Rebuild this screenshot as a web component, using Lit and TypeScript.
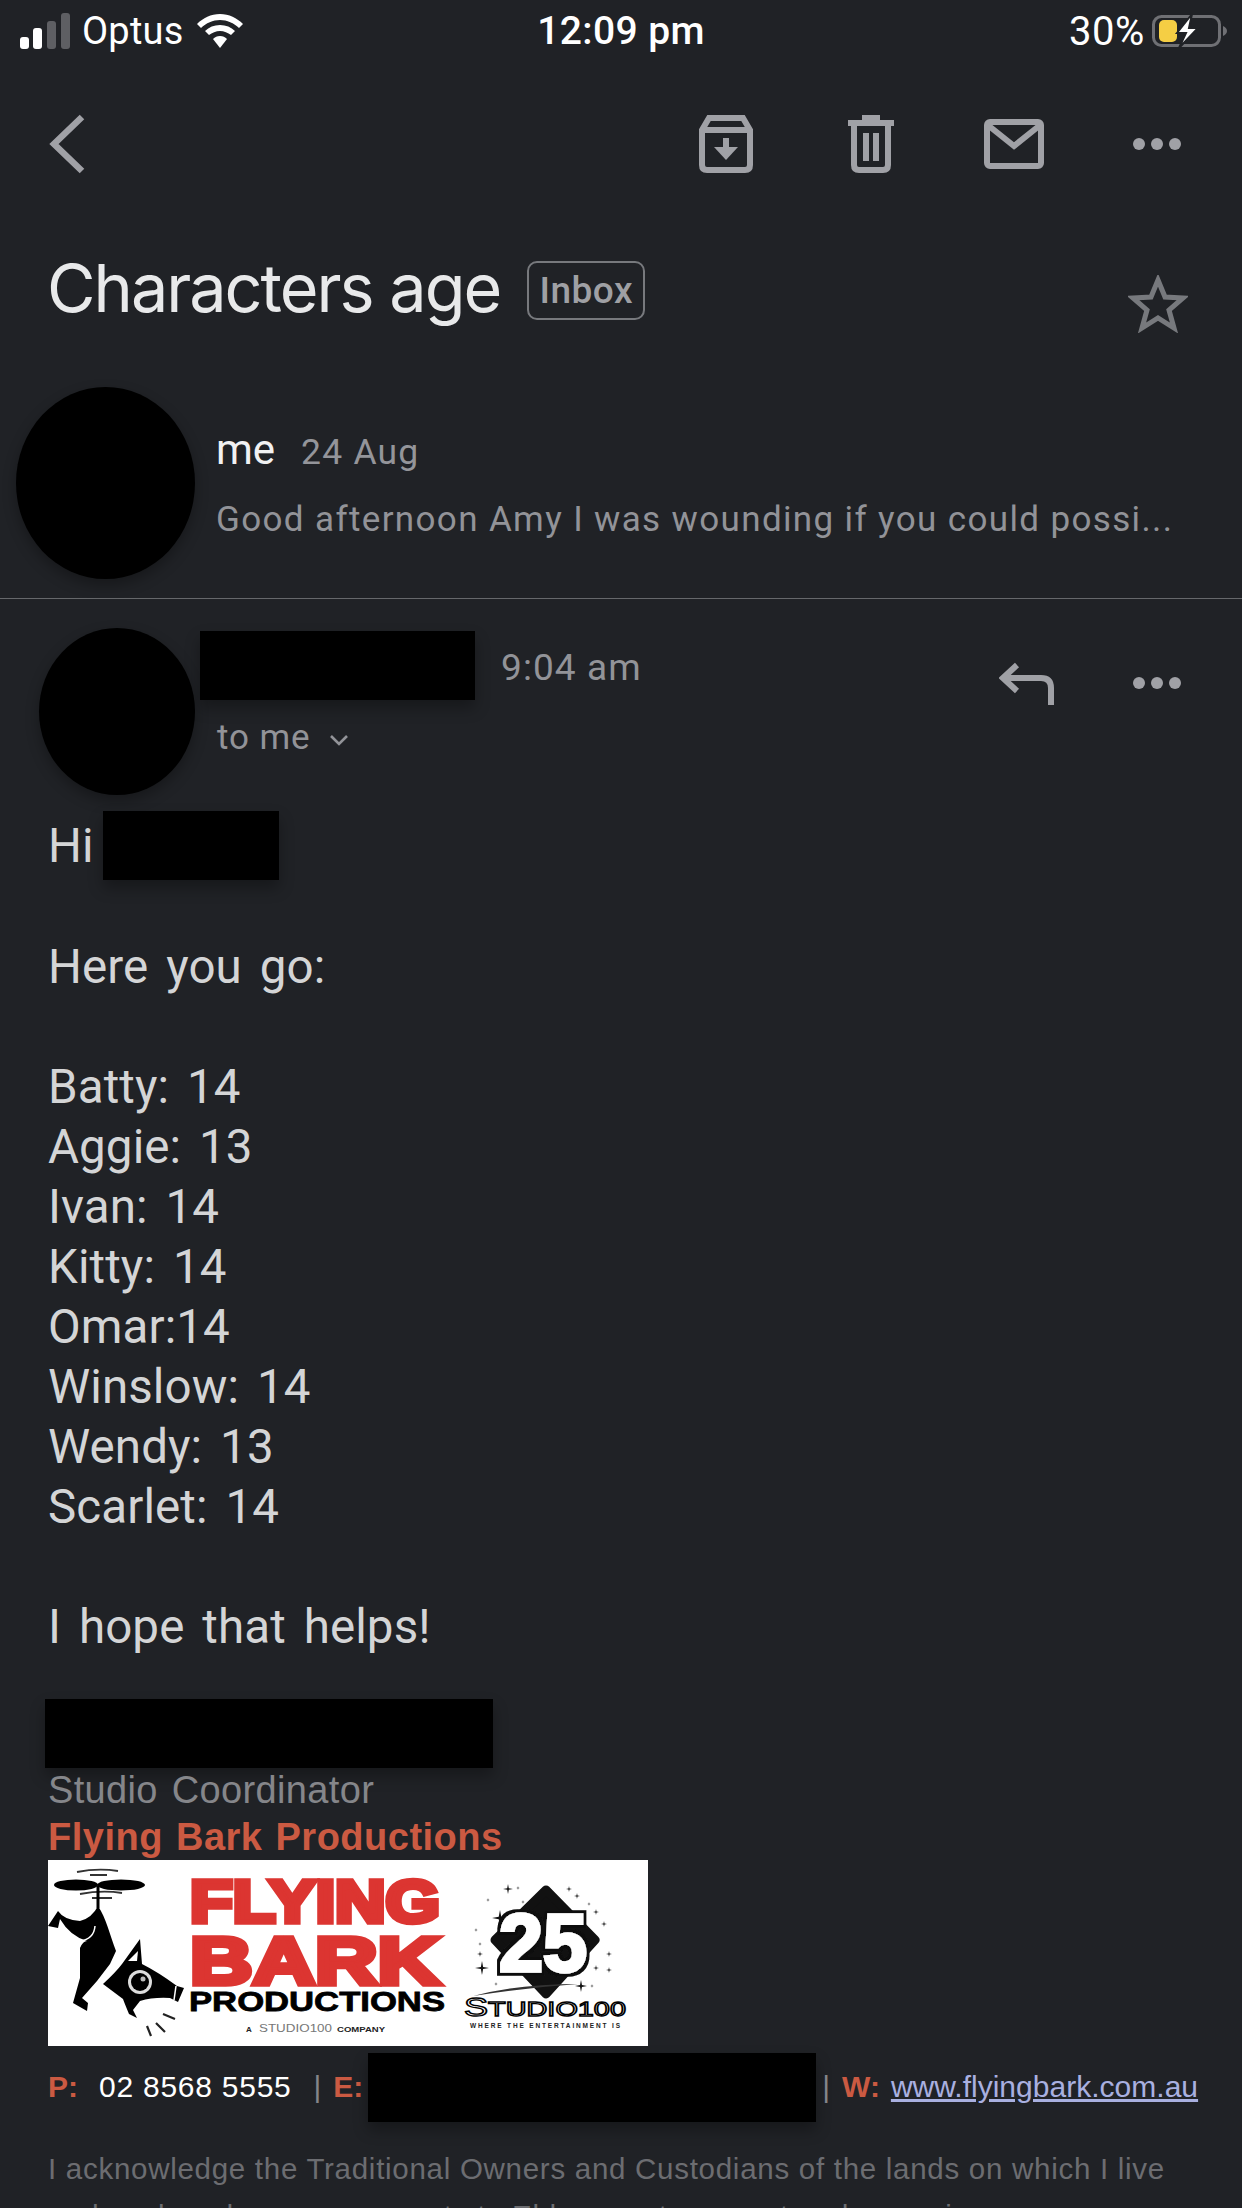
import { LitElement, html, css, svg } from "lit";
import { customElement } from "lit/decorators.js";

const ICON = "#a0a1a6";

function star(x: number, y: number, r: number) {
  const k = r * 0.16;
  return svg`<path d="M${x} ${y - r} L${x + k} ${y - k} L${x + r} ${y} L${x + k} ${y + k} L${x} ${y + r} L${x - k} ${y + k} L${x - r} ${y} L${x - k} ${y - k} Z" fill="#111"/>`;
}

const STARS: [number, number, number][] = [
  [452, 58, 8], [537, 84, 8], [434, 108, 7], [460, 29, 5], [521, 29, 3], [529, 36, 3], [556, 64, 3],
  [561, 94, 3], [561, 110, 3], [428, 70, 2], [432, 94, 3], [432, 84, 2], [440, 40, 2], [548, 52, 3], [548, 108, 3],
  [470, 28, 2], [448, 124, 2], [544, 126, 2], [533, 126, 6], [475, 42, 2], [541, 44, 2],
];

@customElement("app-root")
export class AppRoot extends LitElement {
  static styles = css`
    :host { display: block; width: 1242px; height: 2208px; overflow: hidden; background: #202226; font-family: "Roboto", "Liberation Sans", sans-serif; }
    svg { display: block; flex: none; }
    .status { height: 62px; display: flex; align-items: center; position: relative; color: #fff; font-size: 38px; padding: 0 14px 0 20px; }
    .status .carrier { margin-left: 12px; margin-right: 14px; letter-spacing: .2px; }
    .status .time { position: absolute; left: 0; right: 0; top: 10px; line-height: 42px; text-align: center; font-weight: 500; font-size: 39px; letter-spacing: .4px; }
    .status .pct { margin-left: auto; margin-right: 7px; letter-spacing: .6px; font-size: 40px; }
    .toolbar { height: 118px; display: flex; align-items: center; padding: 0 0 0 48px; margin-top: 23px; }
    .tools { margin-left: auto; display: flex; align-items: center; }
    .t-archive { margin-right: 95px; }
    .t-trash { margin-right: 90px; }
    .t-mail { margin-right: 89px; }
    .t-dots { margin-right: 61px; }
    .titlebar { display: flex; align-items: center; height: 124px; padding: 0 0 0 47px; margin-top: 23px; }
    h1 { margin: 0; font: 400 66.5px/80px "Inter", "Roboto", sans-serif; letter-spacing: -2px; color: #e8e9ea; }
    .badge { margin-left: 27px; width: 118px; height: 59px; box-sizing: border-box; border: 2px solid #77797d; border-radius: 10px; color: #9fa0a4; font: 500 37px/56px "Roboto", sans-serif; text-align: center; margin-top: 4px; letter-spacing: .5px; }
    .star { margin-left: auto; margin-right: 54px; margin-top: 32px; }
    .thread1 { display: flex; padding: 0 0 0 16px; margin-top: 37px; height: 212px; box-sizing: border-box; border-bottom: 1px solid #66686b; }
    .av1 { width: 179px; height: 192px; border-radius: 50%; background: #000; box-shadow: 0 6px 14px rgba(0,0,0,.3); flex: none; }
    .meta { margin-left: 21px; padding-top: 41px; min-width: 0; }
    .line1 { display: flex; align-items: baseline; height: 44px; }
    .me { color: #f1f1f2; font-size: 42px; line-height: 44px; }
    .date { color: #94959a; font-size: 35.5px; line-height: 44px; margin-left: 26px; letter-spacing: 1.2px; }
    .snippet { color: #929398; font-size: 35px; line-height: 44px; margin-top: 26px; letter-spacing: 1.36px; white-space: nowrap; }
    .thread2 { display: flex; padding: 29px 0 0 39px; height: 240px; box-sizing: border-box; }
    .av2 { width: 156px; height: 167px; border-radius: 50%; background: #000; box-shadow: 0 6px 14px rgba(0,0,0,.3); flex: none; }
    .sender { margin-left: 5px; padding-top: 3px; flex: 1; }
    .sline { display: flex; }
    .redact { background: #000; box-shadow: 0 8px 14px rgba(0,0,0,.3); flex: none; }
    .r-name { width: 275px; height: 69px; }
    .time2 { margin-left: 26px; margin-top: 15px; color: #929398; font-size: 37px; line-height: 44px; letter-spacing: 1.1px; }
    .acts { margin-left: auto; display: flex; align-items: center; margin-top: 30px; align-self: flex-start; }
    .t-reply { margin-right: 78px; }
    .tome { display: flex; align-items: center; color: #929398; font-size: 35px; line-height: 44px; margin: 11px 0 0 17px; letter-spacing: .9px; }
    .chev { margin-left: 18px; margin-top: 4px; }
    .body { padding: 0 0 0 48px; margin-top: -28px; color: #d4d5d6; font-size: 47.5px; font-weight: 400; line-height: 60px; letter-spacing: .1px; word-spacing: 6px; }
    .body p { margin: 0 0 60px; }
    .body p.last { margin: 0; }
    .hi { display: flex; align-items: center; height: 69px; margin-bottom: 57px; }
    .r-hi { width: 176px; height: 69px; margin-left: 9px; }
    .sig { margin: 42px 0 0 45px; font-family: "Liberation Sans", Arial, sans-serif; }
    .r-sig { width: 448px; height: 69px; }
    .role { color: #85868a; font-size: 38px; line-height: 46px; margin: -1px 0 0 3px; letter-spacing: .35px; word-spacing: 3px; }
    .co { color: #cb5a42; font-size: 38px; line-height: 46px; font-weight: 700; margin: 1px 0 0 3px; letter-spacing: .5px; word-spacing: 2px; }
    .logo { margin: 0 0 0 3px; }
    .logo svg { background: #fff; }
    .contact { display: flex; align-items: center; height: 70px; margin-top: 6px; margin-left: 3px; font-size: 30px; white-space: nowrap; color: #fff; }
    .contact b { color: #cb5a42; }
    .phone { margin-left: 21px; letter-spacing: .75px; }
    .sep { color: #85868a; margin-left: 22px; }
    .contact b.e { margin-left: 12px; }
    .r-mail { width: 448px; height: 69px; margin: 0 6px 0 5px; }
    .sep2 { color: #85868a; }
    .contact b.w { margin-left: 12px; }
    .contact a { color: #a9b0e0; text-decoration: underline; margin-left: 11px; letter-spacing: .02px; }
    .ack { color: #6c6d71; font-size: 29.5px; line-height: 47px; margin: 23px 0 0 3px; white-space: nowrap; letter-spacing: .72px; }
  `;

  private dots() {
    return html`<svg width="48" height="16" viewBox="0 0 48 16" fill="${ICON}"><circle cx="6" cy="8" r="6"/><circle cx="24" cy="8" r="6"/><circle cx="42" cy="8" r="6"/></svg>`;
  }

  private logo() {
    return html`<svg width="600" height="186" viewBox="0 0 600 186">
      <defs>
        <filter id="outline" x="-10%" y="-10%" width="120%" height="120%">
          <feMorphology in="SourceAlpha" operator="dilate" radius="2.500" result="d"/>
          <feFlood flood-color="#111"/>
          <feComposite in2="d" operator="in" result="o"/>
          <feMerge><feMergeNode in="o"/><feMergeNode in="SourceGraphic"/></feMerge>
        </filter>
      </defs>
      <!-- rotor -->
      <ellipse cx="28" cy="25" rx="22" ry="5.500" fill="#000"/><ellipse cx="73" cy="25" rx="24" ry="5.500" fill="#000"/>
      <path d="M29 12 Q50 8 70 11 M42 15 h17 M32 34 Q54 30 74 33 M44 38 h20" stroke="#333" stroke-width="1.800" fill="none"/>
      <path d="M48.500 26 h3 v22 h-3 z" fill="#000"/>
      <!-- hanging body -->
      <path fill="#000" d="M50 46 C58 58 62 75 68 91 L62 104 L49 121 L34 138 L40 143 L39 151 L25 143 L32 118 L32 88 Q35 81 39 81 Q22 76 12 59 L10 68 L0 66 L10 51 Q16 60 32 61 Q44 58 50 46 Z"/>
      <path d="M47 66 Q46 79 32 81" stroke="#fff" stroke-width="1.500" fill="none"/>
      <!-- head -->
      <path fill="#000" d="M55 124 Q68 112 74 104 L92 79 L94 104 Q110 112 129 126 L136 128 L130 142 L122 138 Q105 137 92 141 L85 150 L89 158 L81 154 Q76 142 75 139 Z"/>
      <path d="M80 101 L90 91 L89 101 Z" fill="#fff"/>
      <path d="M128 126 L126 140" stroke="#fff" stroke-width="1.500"/>
      <circle cx="92" cy="122" r="12" fill="#ddd"/><circle cx="92" cy="122" r="9" fill="#000"/><circle cx="95" cy="119" r="2.500" fill="#bbb"/>
      <path d="M115 154 L127 159 M108 163 L117 172 M99 166 L103 176" stroke="#222" stroke-width="2.200" fill="none"/>

      <g font-family="Liberation Sans, sans-serif" font-weight="700">
        <text x="142" y="62" font-size="60" fill="#dc3531" stroke="#dc3531" stroke-width="5.500" textLength="250" lengthAdjust="spacingAndGlyphs">FLYING</text>
        <text x="142" y="124" font-size="66" fill="#dc3531" stroke="#dc3531" stroke-width="5.500" textLength="250" lengthAdjust="spacingAndGlyphs">BARK</text>
        <text x="141" y="151" font-size="28" fill="#000" stroke="#000" stroke-width=".8" textLength="256" lengthAdjust="spacingAndGlyphs">PRODUCTIONS</text>
        <text x="198" y="172" font-size="8" fill="#222">A</text>
        <text x="211" y="172" font-size="11" fill="#777" font-weight="400" textLength="73" lengthAdjust="spacingAndGlyphs">STUDIO100</text>
        <text x="289" y="172" font-size="8" fill="#222" textLength="48" lengthAdjust="spacingAndGlyphs">COMPANY</text>
      </g>

      <!-- 25 badge -->
      <path d="M498 30 L547 80 L498 134 L447 80 Z" fill="#111" stroke="#111" stroke-width="9" stroke-linejoin="round"/>
      ${STARS.map(([x, y, r]) => star(x, y, r))}
      <text x="451" y="111" font-family="Liberation Sans, sans-serif" font-weight="700" font-size="82" fill="#fff" stroke="#fff" stroke-width="3.500" filter="url(#outline)" textLength="88" lengthAdjust="spacingAndGlyphs">25</text>
      <path d="M425 136 Q470 124 530 124 Q475 128 425 136 Z" fill="#333"/>
      <text x="416" y="156" font-family="Liberation Sans, sans-serif" fill="#fff" stroke="#000" stroke-width="1.300" textLength="162" lengthAdjust="spacingAndGlyphs"><tspan font-size="25">S</tspan><tspan font-size="20">TUDIO100</tspan></text>
      <text x="422" y="168" font-family="Liberation Sans, sans-serif" font-weight="700" font-size="6.500" fill="#222" textLength="150" lengthAdjust="spacing">WHERE THE ENTERTAINMENT IS</text>
    </svg>`;
  }

  render() {
    return html`
      <div class="status">
        <svg width="50" height="36" viewBox="0 0 50 36"><rect x="0" y="24" width="9" height="12" rx="3" fill="#fff"/><rect x="13" y="15" width="9" height="21" rx="3" fill="#fff"/><rect x="27" y="8" width="9" height="28" rx="3" fill="#5e5f63"/><rect x="41" y="0" width="9" height="36" rx="3" fill="#5e5f63"/></svg>
        <span class="carrier">Optus</span>
        <svg width="46" height="34" viewBox="0 0 46 34" fill="#fff"><path d="M23 0 C32 0 40 4 46 10 L42 14 C37 9 30 6 23 6 C16 6 9 9 4 14 L0 10 C6 4 14 0 23 0 Z"/><path d="M23 11 C29 11 34 13 38 17 L34 21 C31 19 27 17 23 17 C19 17 15 19 12 21 L8 17 C12 13 17 11 23 11 Z"/><path d="M23 22 C26 22 28 23 30 25 L23 34 L16 25 C18 23 20 22 23 22 Z"/></svg>
        <span class="time">12:09 pm</span>
        <span class="pct">30%</span>
        <svg width="76" height="36" viewBox="0 0 76 36"><rect x="1.500" y="3.500" width="66" height="29" rx="8" fill="none" stroke="#6f7074" stroke-width="3"/><rect x="7" y="7" width="18" height="22" rx="5" fill="#f5ce44"/><path d="M71 13 q4 2 4 5 q0 3 -4 5 z" fill="#6f7074"/><path d="M40 1 L25 20 H34 L27 35 L46 15 H37 Z" fill="#fff" stroke="#202226" stroke-width="2"/></svg>
      </div>

      <div class="toolbar">
        <svg width="38" height="60" viewBox="0 0 38 60"><path d="M34 3 L6 30 L34 57" fill="none" stroke="${ICON}" stroke-width="6.500"/></svg>
        <div class="tools">
          <svg class="t-archive" width="54" height="58" viewBox="0 0 54 58" fill="none" stroke="${ICON}" stroke-width="6"><path d="M3 15 L10 3 H44 L51 15 V50 Q51 55 46 55 H8 Q3 55 3 50 Z"/><path d="M3 15 H51"/><path d="M27 23 V36"/><path d="M15 32 H39 L27 45 Z" fill="${ICON}" stroke="none"/></svg>
          <svg class="t-trash" width="46" height="58" viewBox="0 0 46 58" fill="none" stroke="${ICON}" stroke-width="6"><path d="M0 8 H46 M14 3 H32"/><path d="M6 10 V50 Q6 55 11 55 H35 Q40 55 40 50 V10"/><path d="M18 18 V46 M28 18 V46"/></svg>
          <svg class="t-mail" width="60" height="50" viewBox="0 0 60 50" fill="none" stroke="${ICON}" stroke-width="6"><rect x="3" y="3" width="54" height="44" rx="3"/><path d="M5 7 L30 27 L55 7"/></svg>
          <span class="t-dots">${this.dots()}</span>
        </div>
      </div>

      <div class="titlebar">
        <h1>Characters age</h1>
        <span class="badge">Inbox</span>
        <svg class="star" width="60" height="58" viewBox="0 0 60 58"><path d="M30 5 L37 22 L55 23 L41 35 L46 53 L30 43 L14 53 L19 35 L5 23 L23 22 Z" fill="none" stroke="#77797d" stroke-width="5"/></svg>
      </div>

      <div class="thread1">
        <div class="av1"></div>
        <div class="meta">
          <div class="line1"><span class="me">me</span><span class="date">24 Aug</span></div>
          <div class="snippet">Good afternoon Amy I was wounding if you could possi...</div>
        </div>
      </div>

      <div class="thread2">
        <div class="av2"></div>
        <div class="sender">
          <div class="sline">
            <div class="redact r-name"></div>
            <span class="time2">9:04 am</span>
            <div class="acts">
              <svg class="t-reply" width="56" height="44" viewBox="0 0 56 44" fill="none" stroke="${ICON}" stroke-width="6"><path d="M18 4 L4 17 L18 30"/><path d="M5 17 H42 Q52 17 52 27 V44"/></svg>
              <span class="t-dots">${this.dots()}</span>
            </div>
          </div>
          <div class="tome">to me
            <svg class="chev" width="20" height="12" viewBox="0 0 20 12"><path d="M2 2 L10 10 L18 2" fill="none" stroke="#929398" stroke-width="2.600"/></svg>
          </div>
        </div>
      </div>

      <div class="body">
        <div class="hi">Hi<div class="redact r-hi"></div></div>
        <p>Here you go:</p>
        <p>Batty: 14<br>Aggie: 13<br>Ivan: 14<br>Kitty: 14<br>Omar:14<br>Winslow: 14<br>Wendy: 13<br>Scarlet: 14</p>
        <p class="last">I hope that helps!</p>
      </div>

      <div class="sig">
        <div class="redact r-sig"></div>
        <div class="role">Studio Coordinator</div>
        <div class="co">Flying Bark Productions</div>
        <div class="logo">${this.logo()}</div>
        <div class="contact">
          <b>P:</b><span class="phone">02 8568 5555</span>
          <span class="sep">|</span><b class="e">E:</b>
          <div class="redact r-mail"></div>
          <span class="sep2">|</span><b class="w">W:</b><a href="#">www.flyingbark.com.au</a>
        </div>
        <div class="ack">I acknowledge the Traditional Owners and Custodians of the lands on which I live<br>and work and pay my respects to Elders past, present and emerging.</div>
      </div>
    `;
  }
}
